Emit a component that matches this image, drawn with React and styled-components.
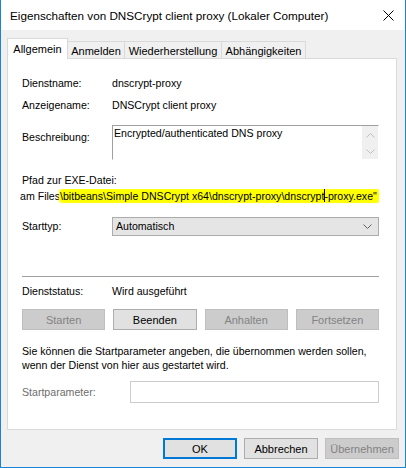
import React from 'react';
import styled, { createGlobalStyle } from 'styled-components';

const FONT = `"Liberation Sans", Arial, sans-serif`;

const Global = createGlobalStyle`
  html, body { margin: 0; padding: 0; background: #ffffff; }
  * { box-sizing: border-box; }
`;

const Window = styled.div`
  width: 406px;
  height: 468px;
  border: 1px solid #1883d7;
  border-top: none;
  background: #f0f0f0;
  display: flex;
  flex-direction: column;
  font-family: ${FONT};
  font-size: 10.6px;
  color: #000;
  overflow: hidden;
`;

const TitleBar = styled.div`
  flex: none;
  height: 30px;
  background: #ffffff;
  display: flex;
  align-items: center;
  padding: 1px 11px 0 9px;
`;

const Title = styled.div`
  flex: 1;
  font-size: 11.7px;
  white-space: nowrap;
`;

const CloseIcon = styled.svg`
  width: 11px;
  height: 11px;
  display: block;
`;

const Body = styled.div`
  padding: 0 8px 0 6px;
  display: flex;
  flex-direction: column;
`;

const TabStrip = styled.div`
  margin-top: 8px;
  height: 21px;
  margin-bottom: -1px;
  display: flex;
  align-items: flex-end;
  position: relative;
  z-index: 1;
`;

const Tab = styled.div`
  width: ${p => p.$w}px;
  height: ${p => (p.$active ? 21 : 17)}px;
  margin-bottom: ${p => (p.$active ? 0 : 1)}px;
  margin-left: ${p => (p.$first ? 0 : -1)}px;
  border: 1px solid #d9d9d9;
  border-bottom: none;
  background: ${p => (p.$active ? '#ffffff' : '#f0f0f0')};
  position: relative;
  z-index: ${p => (p.$active ? 2 : 1)};
  display: flex;
  align-items: center;
  justify-content: center;
  padding-top: ${p => (p.$active ? 0 : 1)}px;
  font-size: 11px;
  white-space: nowrap;
`;

const Panel = styled.div`
  height: 372px;
  background: #ffffff;
  border: 1px solid #d9d9d9;
  padding: 0 17px 0 14px;
  display: flex;
  flex-direction: column;
`;

const Row = styled.div`
  display: flex;
  align-items: ${p => p.$align || 'center'};
  margin-top: ${p => p.$mt || 0}px;
  line-height: 15px;
  min-height: 15px;
`;

const Label = styled.div`
  flex: none;
  width: ${p => p.$w || 90}px;
  margin-top: ${p => p.$mt || 0}px;
  color: ${p => (p.$disabled ? '#6d6d6d' : '#000')};
  white-space: nowrap;
`;

const Value = styled.div`
  white-space: nowrap;
`;

const TextBox = styled.div`
  width: 267px;
  height: 35px;
  display: flex;
  border-top: 1px solid #a0a0a0;
  border-left: 1px solid #a0a0a0;
  border-right: 1px solid #ffffff;
  border-bottom: 1px solid #ffffff;
`;

const TextContent = styled.div`
  flex: 1;
  padding: 0 0 0 1px;
  line-height: 15px;
  white-space: nowrap;
`;

const ScrollBar = styled.div`
  width: 16px;
  background: #f0f0f0;
  display: flex;
  flex-direction: column;
  justify-content: space-between;
  align-items: center;
  padding: 7px 0 5px;
`;

const Chevron = styled.svg`
  display: block;
  width: 9px;
  height: 5px;
`;

const PathBox = styled.div`
  margin-left: -2px;
  width: 362px;
  overflow: hidden;
  white-space: nowrap;
  line-height: 15px;
  height: 15px;
`;

const Mark = styled.span`
  background: #ffff00;
  box-shadow: 0 0 1px 1px #ffff00;
  border-radius: 2px;
  padding: 0 2px 0 0;
`;

const Caret = styled.span`
  display: inline-block;
  width: 0;
  height: 13px;
  vertical-align: -2px;
  border-left: 1px solid #000;
  margin-right: -1px;
`;

const Select = styled.div`
  width: 267px;
  height: 19px;
  background: #e5e5e5;
  border: 1px solid #acacac;
  display: flex;
  align-items: center;
  justify-content: space-between;
  padding: 0 6px 0 3px;
`;

const Separator = styled.div`
  margin-top: 40px;
  height: 1px;
  background: #a0a0a0;
`;

const ButtonGrid = styled.div`
  margin-top: 10px;
  display: grid;
  grid-template-columns: repeat(4, 1fr);
  gap: 8px;
`;

const Button = styled.div`
  width: ${p => (p.$w ? `${p.$w}px` : 'auto')};
  height: 21px;
  display: flex;
  align-items: center;
  justify-content: center;
  white-space: nowrap;
  font-size: 11px;
  background: ${p => (p.$disabled ? '#cccccc' : '#e1e1e1')};
  border: ${p => (p.$default ? '2px solid #0078d7' : p.$disabled ? '1px solid #bfbfbf' : '1px solid #adadad')};
  color: ${p => (p.$disabled ? '#838383' : '#000')};
`;

const Paragraph = styled.div`
  margin-top: 14px;
  line-height: 14px;
  white-space: nowrap;
`;

const Input = styled.div`
  width: 249px;
  height: 22px;
  border: 1px solid #cccccc;
  background: #ffffff;
`;

const Footer = styled.div`
  margin-top: 8px;
  padding-right: 6px;
  display: flex;
  justify-content: flex-end;
  gap: 7px;
`;

const ChevronUp = () => (
  <Chevron viewBox="0 0 9 5">
    <polyline points="0.5,4.5 4.5,0.5 8.5,4.5" fill="none" stroke="#bfbfbf" strokeWidth="1" />
  </Chevron>
);

const ChevronDown = ({ color = '#bfbfbf' }) => (
  <Chevron viewBox="0 0 9 5">
    <polyline points="0.5,0.5 4.5,4.5 8.5,0.5" fill="none" stroke={color} strokeWidth="1" />
  </Chevron>
);

export default function App() {
  return (
    <>
      <Global />
      <Window>
        <TitleBar>
          <Title>Eigenschaften von DNSCrypt client proxy (Lokaler Computer)</Title>
          <CloseIcon viewBox="0 0 11 11">
            <path d="M0.5 0.5 L10.5 10.5 M10.5 0.5 L0.5 10.5" stroke="#000" strokeWidth="1" fill="none" />
          </CloseIcon>
        </TitleBar>
        <Body>
          <TabStrip>
            <Tab $first $active $w={61}>Allgemein</Tab>
            <Tab $w={58}>Anmelden</Tab>
            <Tab $w={98}>Wiederherstellung</Tab>
            <Tab $w={85}>Abhängigkeiten</Tab>
          </TabStrip>
          <Panel>
            <Row $mt={17}>
              <Label>Dienstname:</Label>
              <Value>dnscrypt-proxy</Value>
            </Row>
            <Row $mt={7}>
              <Label>Anzeigename:</Label>
              <Value>DNSCrypt client proxy</Value>
            </Row>
            <Row $mt={12} $align="flex-start">
              <Label $mt={5}>Beschreibung:</Label>
              <TextBox>
                <TextContent>Encrypted/authenticated DNS proxy</TextContent>
                <ScrollBar>
                  <ChevronUp />
                  <ChevronDown />
                </ScrollBar>
              </TextBox>
            </Row>
            <Row $mt={13}>
              <Label $w={200}>Pfad zur EXE-Datei:</Label>
            </Row>
            <Row $mt={1}>
              <PathBox>
                am Files<Mark>\bitbeans\Simple DNSCrypt x64\dnscrypt-proxy\dnscrypt<Caret />-proxy.exe"</Mark>
              </PathBox>
            </Row>
            <Row $mt={13}>
              <Label>Starttyp:</Label>
              <Select>
                <span>Automatisch</span>
                <ChevronDown color="#606060" />
              </Select>
            </Row>
            <Separator />
            <Row $mt={7}>
              <Label>Dienststatus:</Label>
              <Value>Wird ausgeführt</Value>
            </Row>
            <ButtonGrid>
              <Button $disabled>Starten</Button>
              <Button>Beenden</Button>
              <Button $disabled>Anhalten</Button>
              <Button $disabled>Fortsetzen</Button>
            </ButtonGrid>
            <Paragraph>
              Sie können die Startparameter angeben, die übernommen werden sollen,
              <br />
              wenn der Dienst von hier aus gestartet wird.
            </Paragraph>
            <Row $mt={9}>
              <Label $w={108} $disabled>Startparameter:</Label>
              <Input />
            </Row>
          </Panel>
        </Body>
        <Footer>
          <Button $default $w={74}>OK</Button>
          <Button $w={74}>Abbrechen</Button>
          <Button $disabled $w={74}>Übernehmen</Button>
        </Footer>
      </Window>
    </>
  );
}
